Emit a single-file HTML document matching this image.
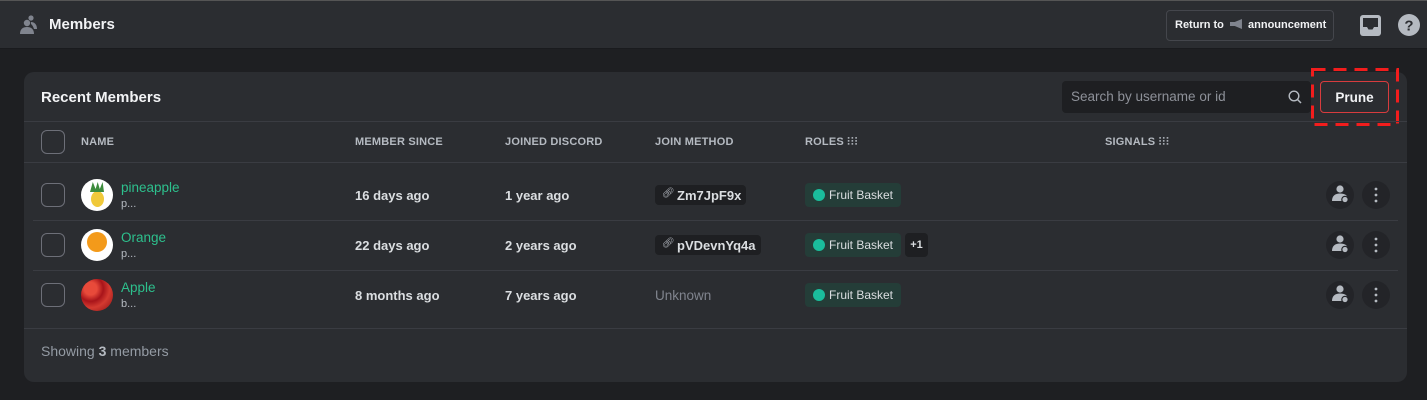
<!DOCTYPE html>
<html><head><style>
*{box-sizing:border-box;margin:0;padding:0}
body{width:1427px;height:400px;background:#1e1f22;font-family:"Liberation Sans",sans-serif;color:#dbdee1;position:relative;overflow:hidden}
.top{position:absolute;left:0;top:0;width:1427px;height:49px;background:#2b2d31;border-top:1px solid #555;border-bottom:1px solid #1a1b1e}
.a{position:absolute;white-space:nowrap}
.card{position:absolute;left:24px;top:72px;width:1383px;height:310px;background:#2b2d31;border-radius:10px}
.hl{position:absolute;left:0;width:1383px;height:1px;background:#3a3c42}
.cb{position:absolute;width:24px;height:24px;border:1.5px solid #6d6f78;border-radius:6px}
.th{position:absolute;top:64px;font-size:11px;font-weight:bold;color:#b5bac1;letter-spacing:.2px;white-space:nowrap}
.td{position:absolute;font-size:13px;font-weight:bold;color:#dbdee1;white-space:nowrap}
.nm{position:absolute;font-size:13.5px;color:#2dc08d}
.sub{position:absolute;font-size:11px;color:#b5bac1}
.av{position:absolute;width:32px;height:32px;border-radius:50%;overflow:hidden}
.inv{position:absolute;height:20px;background:#1e1f22;border-radius:4px;font-size:13px;font-weight:bold;padding:3px 5px 0 22px;color:#dbdee1;white-space:nowrap}
.role{position:absolute;left:781px;height:24px;width:96px;background:#243d38;border-radius:4px;font-size:12px;color:#dbdee1;padding:5px 0 0 24px;white-space:nowrap}
.role:before{content:"";position:absolute;left:8px;top:6px;width:12px;height:12px;border-radius:50%;background:#1abc9c}
.btn{position:absolute;width:28px;height:28px;border-radius:50%;background:#232428}
</style></head><body>
<div class="top">
 <svg class="a" style="left:19px;top:14px" width="20" height="20" viewBox="0 0 20 20"><circle cx="12" cy="3" r="2.6" fill="#80848e"/><circle cx="8" cy="8" r="3.2" fill="#80848e"/><path d="M1 19c0-5 3-7 7-7s7 2 7 7z" fill="#80848e"/><path d="M12 7c3 0 6 2 6 7h-3c-1-3-2-4-3-5z" fill="#80848e"/></svg>
 <div class="a" style="left:49px;top:15px;font-size:15px;font-weight:bold;color:#f2f3f5">Members</div>
 <div class="a" style="left:1166px;top:9px;width:168px;height:31px;border:1px solid #44464c;border-radius:4px;font-size:11px;font-weight:bold;color:#f2f3f5;padding:8px 0 0 8px">Return to <span style="display:inline-block;width:12px;height:10px;background:#80848e;vertical-align:-1px;margin:0 3px;clip-path:polygon(0 30%,40% 30%,100% 0,100% 100%,40% 70%,0 70%)"></span> announcement</div>
 <svg class="a" style="left:1360px;top:14px" width="21" height="21" viewBox="0 0 21 21"><rect x="0" y="0" width="21" height="21" rx="3" fill="#b5bac1"/><path d="M3 3h15v9h-4l-1.5 2.5h-4L7 12H3z" fill="#2b2d31"/></svg>
 <svg class="a" style="left:1398px;top:13px" width="22" height="22" viewBox="0 0 22 22"><circle cx="11" cy="11" r="11" fill="#b5bac1"/><text x="11" y="16.5" font-size="15" font-weight="bold" text-anchor="middle" fill="#2b2d31" font-family="Liberation Sans">?</text></svg>
</div>
<div class="card">
 <div class="a" style="left:17px;top:17px;font-size:15px;font-weight:bold;color:#f2f3f5">Recent Members</div>
 <div class="a" style="left:1038px;top:9px;width:249px;height:32px;background:#1e1f22;border-radius:4px;font-size:13.5px;color:#8e9199;padding:8px 0 0 9px">Search by username or id
  <svg class="a" style="left:226px;top:9px" width="14" height="14" viewBox="0 0 14 14"><circle cx="6" cy="6" r="4.8" stroke="#b5bac1" stroke-width="1.4" fill="none"/><path d="M9.5 9.5L13 13" stroke="#b5bac1" stroke-width="1.5"/></svg></div>
 <div class="a" style="left:1296px;top:9px;width:69px;height:32px;border:1px solid #d83c3e;border-radius:4px;font-size:13.5px;font-weight:bold;color:#f2f3f5;text-align:center;padding-top:8px">Prune</div>
 <svg class="a" style="left:1287px;top:-4px" width="88" height="58"><rect x="1.5" y="1.5" width="85" height="55" fill="none" stroke="#f21d1d" stroke-width="3" stroke-dasharray="13 8"/></svg>
 <div class="hl" style="top:49px"></div>
 <div class="cb" style="left:17px;top:58px"></div>
 <div class="th" style="left:57px">NAME</div>
 <div class="th" style="left:331px">MEMBER SINCE</div>
 <div class="th" style="left:481px">JOINED DISCORD</div>
 <div class="th" style="left:631px">JOIN METHOD</div>
 <div class="th" style="left:781px">ROLES <span style="letter-spacing:1px">⫶⫶⫶</span></div>
 <div class="th" style="left:1081px">SIGNALS <span style="letter-spacing:1px">⫶⫶⫶</span></div>
 <div class="hl" style="top:90px"></div>

 <div class="cb" style="left:17px;top:111px"></div>
 <div class="av" style="left:57px;top:107px;background:#fff"><div class="a" style="left:10px;top:12px;width:13px;height:16px;border-radius:50%;background:#f0c93a"></div><div class="a" style="left:9px;top:3px;width:14px;height:10px;background:#3d8c3d;clip-path:polygon(0 100%,20% 0,40% 70%,55% 0,70% 70%,90% 0,100% 100%)"></div></div>
 <div class="nm" style="left:97px;top:108px">pineapple</div><div class="sub" style="left:97px;top:126px">p...</div>
 <div class="td" style="left:331px;top:116px">16 days ago</div>
 <div class="td" style="left:481px;top:116px">1 year ago</div>
 <div class="inv" style="left:631px;top:113px">Zm7JpF9x<span class="a" style="left:7px;top:3px;font-size:10px;color:#b5bac1;font-weight:normal">🔗︎</span></div>
 <div class="role" style="top:111px">Fruit Basket</div>
 <div class="btn" style="left:1302px;top:109px"></div><div class="btn" style="left:1338px;top:109px"></div>
 <div class="hl" style="top:148px;left:9px;width:1365px"></div>

 <div class="cb" style="left:17px;top:161px"></div>
 <div class="av" style="left:57px;top:157px;background:#fff"><div class="a" style="left:6px;top:3px;width:20px;height:20px;border-radius:50%;background:#f39a1a"></div></div>
 <div class="nm" style="left:97px;top:158px">Orange</div><div class="sub" style="left:97px;top:176px">p...</div>
 <div class="td" style="left:331px;top:166px">22 days ago</div>
 <div class="td" style="left:481px;top:166px">2 years ago</div>
 <div class="inv" style="left:631px;top:163px">pVDevnYq4a<span class="a" style="left:7px;top:3px;font-size:10px;color:#b5bac1;font-weight:normal">🔗︎</span></div>
 <div class="role" style="top:161px">Fruit Basket</div>
 <div class="a" style="left:881px;top:161px;width:23px;height:24px;background:#1e1f22;border-radius:4px;font-size:11px;font-weight:bold;text-align:center;padding-top:6px">+1</div>
 <div class="btn" style="left:1302px;top:159px"></div><div class="btn" style="left:1338px;top:159px"></div>
 <div class="hl" style="top:198px;left:9px;width:1365px"></div>

 <div class="cb" style="left:17px;top:211px"></div>
 <div class="av" style="left:57px;top:207px;background:radial-gradient(circle at 30% 30%,#e84a3a 0 20%,#a8141a 40%,#d43a30 60%,#8a0f12)"></div>
 <div class="nm" style="left:97px;top:208px">Apple</div><div class="sub" style="left:97px;top:226px">b...</div>
 <div class="td" style="left:331px;top:216px">8 months ago</div>
 <div class="td" style="left:481px;top:216px">7 years ago</div>
 <div class="a" style="left:631px;top:216px;font-size:13.5px;color:#80848e">Unknown</div>
 <div class="role" style="top:211px">Fruit Basket</div>
 <div class="btn" style="left:1302px;top:209px"></div><div class="btn" style="left:1338px;top:209px"></div>
 <div class="hl" style="top:256px"></div>
 <div class="a" style="left:17px;top:271px;font-size:14px;color:#949ba4">Showing <b style="color:#b5bac1">3</b> members</div>
</div>
<svg class="a" style="left:1326px;top:181px" width="100" height="130" viewBox="0 0 100 130">
 <g id="r" fill="#b5bac1">
  <circle cx="14" cy="8" r="3.6"/><path d="M6 20c0-5 3-7.5 8-7.5s7 2 7.5 4l-2 3.5z"/><circle cx="19" cy="18.5" r="3.2" fill="#b5bac1" stroke="#232428" stroke-width="1.2"/>
  <circle cx="50" cy="8" r="1.4"/><circle cx="50" cy="14" r="1.4"/><circle cx="50" cy="20" r="1.4"/>
 </g>
 <use href="#r" y="50"/><use href="#r" y="100"/>
</svg>
</body></html>
